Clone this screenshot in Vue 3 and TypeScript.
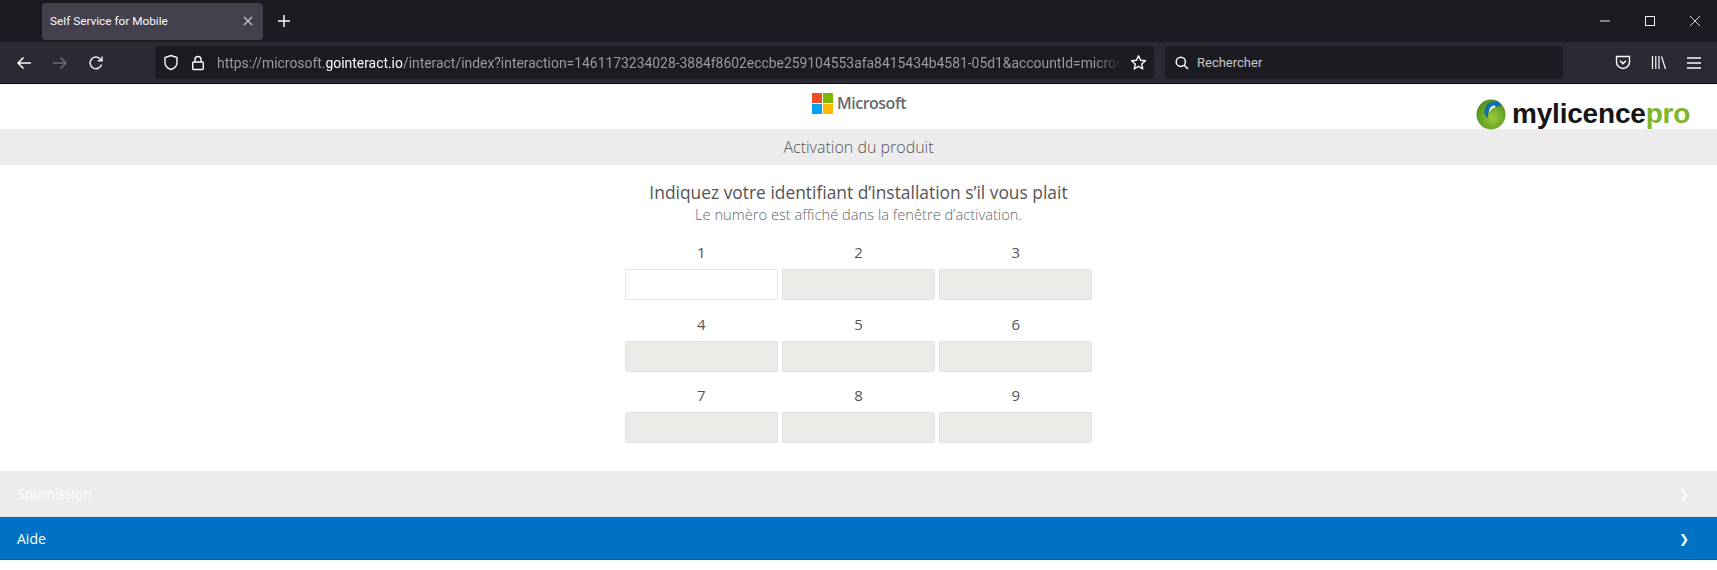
<script setup lang="ts">
const cells: number[] = [1, 2, 3, 4, 5, 6, 7, 8, 9]
const msSquares: string[] = ['#f25022', '#7fba00', '#00a4ef', '#ffb900']
</script>

<template>
  <div class="page">
    <!-- barre d'onglets -->
    <div class="tabbar">
      <div class="tab">
        <span class="tab-title">Self Service for Mobile</span>
        <svg class="tab-close" width="10" height="10" viewBox="0 0 10 10">
          <path d="M1 1l8 8M9 1l-8 8" stroke="#c9c9cf" stroke-width="1.2" fill="none" />
        </svg>
      </div>
      <svg class="new-tab" width="14" height="14" viewBox="0 0 14 14">
        <path d="M7 1v12M1 7h12" stroke="#fbfbfe" stroke-width="1.5" fill="none" />
      </svg>
      <div class="win-btns">
        <svg width="12" height="12" viewBox="0 0 12 12"><path d="M1 6h10" stroke="#e8e8e8" stroke-width="1" /></svg>
        <svg width="12" height="12" viewBox="0 0 12 12"><rect x="1.5" y="1.5" width="9" height="9" stroke="#f2f2f2" fill="none" /></svg>
        <svg width="12" height="12" viewBox="0 0 12 12"><path d="M1 1l10 10M11 1L1 11" stroke="#d8d8d8" fill="none" /></svg>
      </div>
    </div>

    <!-- barre de navigation -->
    <div class="toolbar">
      <div class="nav-btns">
        <svg width="16" height="16" viewBox="0 0 16 16"><path d="M15 8H2M7.5 2.5L2 8l5.5 5.5" stroke="#fbfbfe" stroke-width="1.5" fill="none" /></svg>
        <svg width="16" height="16" viewBox="0 0 16 16"><path d="M1 8h13M8.5 2.5L14 8l-5.5 5.5" stroke="#6d6c75" stroke-width="1.5" fill="none" /></svg>
        <svg width="16" height="16" viewBox="0 0 16 16"><path d="M13.5 9.5A5.8 5.8 0 1 1 12.2 4L14 5.5M14 1.5v4.200H9.800" stroke="#e8e8ea" stroke-width="1.5" fill="none" /></svg>
      </div>
      <div class="urlbar">
        <svg width="16" height="17" viewBox="0 0 16 17"><path d="M8 1.5l6 2v5c0 3.5-3 6-6 7-3-1-6-3.5-6-7v-5z" stroke="#fbfbfe" stroke-width="1.4" fill="none" /></svg>
        <svg class="lock" width="14" height="16" viewBox="0 0 14 16"><path d="M4 7V4.500a3 3 0 0 1 6 0V7" stroke="#fbfbfe" stroke-width="1.4" fill="none" /><rect x="1.7" y="7" width="10.6" height="7.5" rx="1" stroke="#fbfbfe" stroke-width="1.4" fill="none" /></svg>
        <div class="url">https://microsoft.<b>gointeract.io</b>/interact/index?interaction=1461173234028-3884f8602eccbe259104553afa8415434b4581-05d1&amp;accountId=micros</div>
        <svg width="17" height="17" viewBox="0 0 17 17"><path d="M8.5 1.8l2 4.500 4.900.5-3.700 3.200 1.100 4.800-4.300-2.500-4.300 2.500 1.100-4.800L1.600 6.800l4.900-.5z" stroke="#fbfbfe" stroke-width="1.4" fill="none" stroke-linejoin="round" /></svg>
      </div>
      <div class="searchbar">
        <svg width="14" height="14" viewBox="0 0 14 14"><circle cx="5.8" cy="5.8" r="4.6" stroke="#fbfbfe" stroke-width="1.5" fill="none" /><path d="M9.200 9.200L13 13" stroke="#fbfbfe" stroke-width="1.6" /></svg>
        <span>Rechercher</span>
      </div>
      <div class="tool-btns">
        <svg width="16" height="15" viewBox="0 0 16 15"><path d="M1.5 1.5h13v5.500a6.500 6.500 0 0 1-13 0z" stroke="#fbfbfe" stroke-width="1.4" fill="none" /><path d="M5 5.800l3 2.800 3-2.800" stroke="#fbfbfe" stroke-width="1.5" fill="none" /></svg>
        <svg width="16" height="15" viewBox="0 0 16 15"><path d="M1.5 1v13M4.800 1v13M8 1v13M10.500 1.500L14.500 14" stroke="#fbfbfe" stroke-width="1.2" fill="none" /></svg>
        <svg width="14" height="12" viewBox="0 0 14 12"><path d="M0 1h14M0 6h14M0 11h14" stroke="#fbfbfe" stroke-width="1.4" /></svg>
      </div>
    </div>

    <!-- contenu -->
    <header class="logos">
      <div class="ms-logo">
        <div class="ms-grid">
          <i v-for="c in msSquares" :key="c" :style="{ background: c }"></i>
        </div>
        <span>Microsoft</span>
      </div>
      <div class="mlp-logo">
        <svg width="30" height="31" viewBox="0 0 30 31">
          <defs>
            <radialGradient id="mlpGreen" cx="55%" cy="60%" r="65%">
              <stop offset="0%" stop-color="#9ccb3b" />
              <stop offset="100%" stop-color="#4a8a1c" />
            </radialGradient>
          </defs>
          <ellipse cx="15" cy="15.5" rx="14.5" ry="15" fill="url(#mlpGreen)" />
          <path d="M22 2.500C15 1 9 5.500 8.500 12c-.3 3.500 1 6 3.500 7.500-.8-4.500 1-9.500 6-11 3-1 5.500-1 7-2C24.500 4.500 23.500 3.200 22 2.500z" fill="#0f6fa8" />
          <path d="M17.500 6.500c-3 1-4.800 4-4.500 7 2-3 4-5 7-5.500-.6-1.100-1.300-1.700-2.500-1.500z" fill="#e9f4f7" />
        </svg>
        <span class="mlp-text">mylicence<em>pro</em></span>
      </div>
    </header>

    <div class="section-title">Activation du produit</div>

    <main class="content">
      <h1>Indiquez votre identifiant d’installation s’il vous plait</h1>
      <p>Le numèro est affiché dans la fenêtre d’activation.</p>
      <div class="fields">
        <div v-for="n in cells" :key="n" class="field">
          <label>{{ n }}</label>
          <div :class="['box', { active: n === 1 }]"></div>
        </div>
      </div>
    </main>

    <div class="row muted">
      <span>Soumission</span>
      <span class="chev">❯</span>
    </div>
    <div class="row help">
      <span>Aide</span>
      <span class="chev">❯</span>
    </div>
  </div>
</template>

<style scoped>
.page {
  width: 1717px;
  height: 570px;
  overflow: hidden;
  background: #fff;
  display: flex;
  flex-direction: column;
  font-family: "Open Sans", sans-serif;
}

.tabbar {
  height: 42px;
  background: #1c1b22;
  display: flex;
  align-items: center;
  padding-left: 42px;
  flex: none;
}

.tab {
  width: 221px;
  height: 37px;
  background: #42414d;
  border-radius: 4px;
  display: flex;
  align-items: center;
  justify-content: space-between;
  padding: 0 10px 0 8px;
  box-sizing: border-box;
}

.tab-title {
  color: #fbfbfe;
  font: 11.8px Roboto, sans-serif;
}

.new-tab {
  margin-left: 14px;
}

.win-btns {
  margin-left: auto;
  display: flex;
  gap: 33px;
  padding-right: 16px;
}

.toolbar {
  height: 41px;
  background: #2b2a33;
  border-bottom: 1px solid #0c0c0d;
  display: flex;
  align-items: center;
  flex: none;
}

.nav-btns {
  width: 155px;
  padding-left: 16px;
  box-sizing: border-box;
  display: flex;
  gap: 20px;
}

.urlbar {
  width: 999px;
  height: 33px;
  background: #1c1b22;
  border-radius: 4px;
  display: flex;
  align-items: center;
  padding: 0 5px 0 8px;
  box-sizing: border-box;
}

.lock {
  margin-left: 12px;
}

.url {
  margin-left: 12px;
  width: 905px;
  margin-right: 8px;
  overflow: hidden;
  white-space: nowrap;
  color: #9a9aa1;
  font: 13.9px Roboto, sans-serif;
  -webkit-mask-image: linear-gradient(to right, #000 97%, transparent);
  mask-image: linear-gradient(to right, #000 97%, transparent);
}

.url b {
  color: #fbfbfe;
  font-weight: 400;
}

.searchbar {
  width: 398px;
  height: 33px;
  margin-left: 11px;
  background: #1c1b22;
  border-radius: 4px;
  display: flex;
  align-items: center;
  gap: 8px;
  padding-left: 10px;
  box-sizing: border-box;
  color: #c8c8cc;
  font: 13px Roboto, sans-serif;
}

.tool-btns {
  display: flex;
  align-items: center;
  gap: 20px;
  margin-left: 52px;
}

.logos {
  position: relative;
  height: 45px;
  display: flex;
  justify-content: center;
  flex: none;
}

.ms-logo {
  display: flex;
  align-items: center;
  gap: 4px;
  height: 24px;
  margin-top: 7px;
  margin-left: 1px;
}

.ms-grid {
  width: 21px;
  height: 21px;
  display: grid;
  grid-template-columns: 1fr 1fr;
  gap: 1px;
}

.ms-logo span {
  color: #6a6a6a;
  font-size: 16px;
  font-weight: 600;
  letter-spacing: -0.5px;
}

/* logo partenaire, dépasse sur la bande grise */
.mlp-logo {
  position: absolute;
  left: 1476px;
  top: 14px;
  display: flex;
  align-items: center;
  gap: 6px;
  z-index: 1;
}

.mlp-text {
  font: bold 28px "Liberation Sans", sans-serif;
  color: #151515;
  letter-spacing: -0.2px;
}

.mlp-text em {
  font-style: normal;
  color: #7fb52c;
}

.section-title {
  height: 36px;
  line-height: 37px;
  background: #ececec;
  text-align: center;
  color: #555;
  font-size: 16px;
  font-weight: 300;
  flex: none;
}

.content {
  flex: none;
  height: 306px;
  text-align: center;
  padding-top: 15px;
  box-sizing: border-box;
}

h1 {
  margin: 0;
  color: #555;
  font-size: 17.4px;
  line-height: 24px;
  font-weight: 400;
}

p {
  margin: 0;
  color: #666;
  font-size: 14.7px;
  line-height: 20px;
  font-weight: 300;
}

.fields {
  width: 468px;
  margin: 16px auto 0;
  display: grid;
  grid-template-columns: repeat(3, 1fr);
  column-gap: 4px;
  row-gap: 11.5px;
}

.field label {
  display: block;
  height: 25px;
  line-height: 25px;
  margin-bottom: 4px;
  color: #555;
  font-size: 15px;
}

.box {
  height: 31px;
  background: #ebebe8;
  border: 1px solid #e4e4e1;
  border-radius: 1px;
  box-sizing: border-box;
}

.box.active {
  background: #fff;
  border-color: #e6e6e6;
}

.row {
  flex: none;
  display: flex;
  align-items: center;
  justify-content: space-between;
  padding: 0 28px 0 17px;
  font-size: 14px;
  color: #fff;
}

.chev {
  font-size: 12px;
}

.muted {
  height: 45px;
  background: #ececec;
  border-bottom: 1px solid #ddd;
}

.help {
  height: 43px;
  padding-top: 1px;
  background: #0072c6;
  border-bottom: 1px solid #005ea3;
  box-sizing: border-box;
}
</style>
